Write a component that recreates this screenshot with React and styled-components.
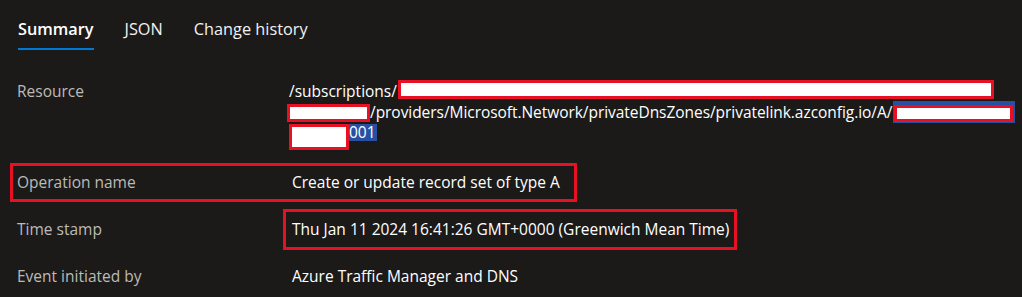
import React from "react";
import styled, { createGlobalStyle } from "styled-components";

const GlobalStyle = createGlobalStyle`
  html, body {
    margin: 0;
    padding: 0;
    background: #1b1a19;
  }
  body {
    font-family: "Open Sans", "Noto Sans", sans-serif;
    color: #ffffff;
  }
`;

const Page = styled.div`
  width: 1022px;
  min-height: 297px;
  background: #1b1a19;
  overflow: hidden;
`;

const TabBar = styled.div`
  display: flex;
  align-items: flex-end;
  gap: 31px;
  padding: 18px 0 0 18px;
`;

const Tab = styled.div`
  font-size: 16.3px;
  line-height: 22px;
  font-weight: ${(p) => (p.$active ? 600 : 400)};
  color: ${(p) => (p.$active ? "#ffffff" : "#f3f2f1")};
  padding-bottom: 8px;
  border-bottom: 2px solid ${(p) => (p.$active ? "#0078d4" : "transparent")};
  cursor: pointer;
`;

const Details = styled.div`
  padding-top: 18px;
`;

const Row = styled.div`
  position: relative;
  display: grid;
  grid-template-columns: 271px 1fr;
  padding: 13px 0 ${(p) => p.$padBottom ?? 13}px 17px;
  font-size: 15.5px;
  line-height: 21px;

  ${(p) =>
    p.$annotated &&
    `
    &::after {
      content: "";
      position: absolute;
      left: 10px;
      top: 4px;
      width: 561px;
      height: 33px;
      border: 3px solid #e81123;
      pointer-events: none;
    }
  `}
`;

const Label = styled.div`
  color: #bdbab7;
  white-space: nowrap;
`;

const Value = styled.div`
  color: #ffffff;
  white-space: nowrap;
  padding-left: ${(p) => p.$inset ?? 0}px;
`;

const Redaction = styled.span`
  display: inline-block;
  box-sizing: border-box;
  vertical-align: top;
  width: ${(p) => p.$w}px;
  height: ${(p) => p.$h}px;
  margin-top: ${(p) => p.$dy ?? 0}px;
  margin-bottom: ${(p) => 21 - p.$h - (p.$dy ?? 0)}px;
  margin-left: ${(p) => p.$dx ?? 0}px;
  background: #ffffff;
  border: 3px solid #e81123;
`;

const SelectedBlock = styled.span`
  display: inline-flex;
  box-sizing: border-box;
  vertical-align: top;
  width: ${(p) => p.$w}px;
  height: 22px;
  margin-top: -1px;
  margin-bottom: 0;
  margin-left: 1px;
  padding: 4px 0 0 1px;
  background: #2750a3;
`;

const InnerRedaction = styled.span`
  display: block;
  box-sizing: border-box;
  width: ${(p) => p.$w}px;
  height: 17px;
  background: #ffffff;
  border: 3px solid #e81123;
`;

const Selected = styled.span`
  display: inline-block;
  vertical-align: top;
  margin-top: 1px;
  height: 17px;
  line-height: 17px;
  padding: 0 1px 0 0;
  background: #2750a3;
  color: #ffffff;
`;

const Path = styled.span`
  letter-spacing: -0.05px;
`;

const Boxed = styled.span`
  position: relative;
  display: inline-block;

  &::after {
    content: "";
    position: absolute;
    left: -9px;
    right: -8px;
    top: -10px;
    bottom: -10px;
    border: 3px solid #e81123;
    pointer-events: none;
  }
`;

export default function App() {
  return (
    <>
      <GlobalStyle />
      <Page>
        <TabBar>
          <Tab $active>Summary</Tab>
          <Tab>JSON</Tab>
          <Tab>Change history</Tab>
        </TabBar>
        <Details>
          <Row $padBottom={15}>
            <Label>Resource</Label>
            <Value $inset={1}>
              /subscriptions/
              <Redaction $w={596} $h={19} $dy={-1} $dx={1} />
              <br />
              <Redaction $w={83} $h={18} $dy={2} $dx={-2} />
              <Path>/providers/Microsoft.Network/privateDnsZones/privatelink.azconfig.io/A/</Path>
              <SelectedBlock $w={122}>
                <InnerRedaction $w={119} />
              </SelectedBlock>
              <br />
              <Redaction $w={60} $h={26} $dy={1} />
              <Selected>001</Selected>
            </Value>
          </Row>
          <Row $annotated>
            <Label>Operation name</Label>
            <Value $inset={4}>Create or update record set of type A</Value>
          </Row>
          <Row>
            <Label>Time stamp</Label>
            <Value $inset={4}>
              <Boxed>Thu Jan 11 2024 16:41:26 GMT+0000 (Greenwich Mean Time)</Boxed>
            </Value>
          </Row>
          <Row>
            <Label>Event initiated by</Label>
            <Value $inset={4}>Azure Traffic Manager and DNS</Value>
          </Row>
        </Details>
      </Page>
    </>
  );
}
